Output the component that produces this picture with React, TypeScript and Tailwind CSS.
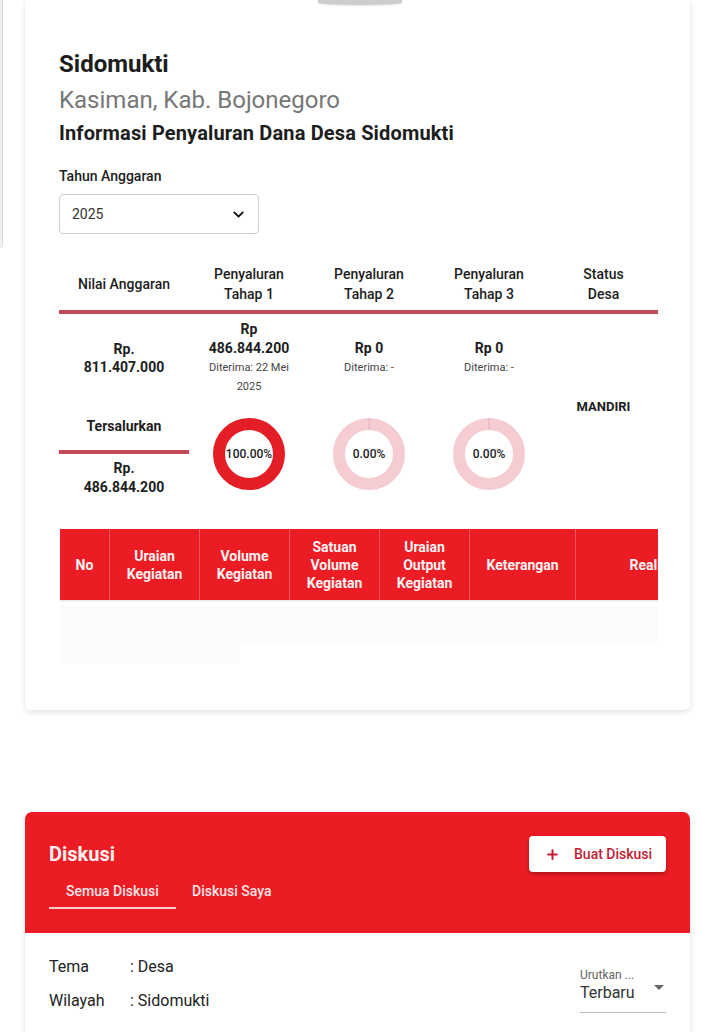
import { ChevronDown, Plus } from 'lucide-react';

const kegiatanCols = [
  { label: ['No'], w: 'w-[50px]' },
  { label: ['Uraian', 'Kegiatan'], w: 'w-[90px]' },
  { label: ['Volume', 'Kegiatan'], w: 'w-[90px]' },
  { label: ['Satuan', 'Volume', 'Kegiatan'], w: 'w-[90px]' },
  { label: ['Uraian', 'Output', 'Kegiatan'], w: 'w-[90px]' },
  { label: ['Keterangan'], w: 'w-[106px]' },
  { label: ['Realisasi'], w: 'w-[164px]' },
];

function Donut({ percent }: { percent: number }) {
  const r = 30;
  const c = 2 * Math.PI * r;
  const full = percent >= 100;
  return (
    <div className="relative h-[74px] w-[74px]">
      <svg width="74" height="74" viewBox="0 0 74 74">
        <circle cx="37" cy="37" r={r} fill="none" stroke={full ? '#e41e26' : '#f6ccd3'} strokeWidth="12" />
        {!full && (
          <circle
            cx="37"
            cy="37"
            r={r}
            fill="none"
            stroke="#e41e26"
            strokeWidth="12"
            strokeDasharray={`${(percent / 100) * c} ${c}`}
            transform="rotate(-90 37 37)"
          />
        )}
        {!full && <line x1="37" y1="1" x2="37" y2="13" stroke="#e6b3bb" strokeWidth="1" />}
      </svg>
      <span className="absolute inset-0 flex items-center justify-center text-[12px] font-medium text-[#222]">
        {percent.toFixed(2)}%
      </span>
    </div>
  );
}

function HeadCell({ lines }: { lines: string[] }) {
  return (
    <div className="flex flex-col items-center justify-center border-b-4 border-[#c14b57] pb-[6px] pt-2 text-center text-[14px] font-medium leading-5 text-[#1d1d1d]">
      {lines.map((l) => (
        <span key={l}>{l}</span>
      ))}
    </div>
  );
}

function Tahap({ amount, date }: { amount: string[]; date: string[] }) {
  return (
    <div className="flex flex-col items-center justify-center py-[6px] text-center">
      {amount.map((a) => (
        <span key={a} className="text-[14px] font-bold leading-[19px] text-[#1d1d1d]">
          {a}
        </span>
      ))}
      {date.map((d) => (
        <span key={d} className="text-[11px] leading-[19px] text-[#444]">
          {d}
        </span>
      ))}
    </div>
  );
}

export default function App() {
  return (
    <div className="relative min-h-[1032px] overflow-hidden bg-white font-['Roboto',sans-serif] text-[#1d1d1d]">
      {/* edge of the side panel */}
      <div className="absolute left-0 top-0 h-[248px] w-[3px] rounded-br-[3px] border-r border-[#dadada] bg-[#f1f1f1]" />

      {/* info card */}
      <div className="relative ml-[25px] w-[665px] rounded-b-[6px] bg-white px-[34px] pb-[46px] shadow-[0_2px_6px_rgba(0,0,0,0.12)]">
        <div className="absolute left-[293px] top-0 h-[5px] w-[84px] rounded-b-[50%] bg-[#cdcdcd] shadow-[0_1px_2px_rgba(0,0,0,0.1)]" />

        <h1 className="pt-[50px] text-[24px] font-bold leading-[28px]">Sidomukti</h1>
        <p className="mt-[6px] text-[24px] leading-[32px] text-[#777]">Kasiman, Kab. Bojonegoro</p>
        <h2 className="mt-[3px] text-[20px] font-bold leading-[28px] tracking-[0.15px]">
          Informasi Penyaluran Dana Desa Sidomukti
        </h2>

        <div className="mt-[19px] text-[14px] font-medium leading-5">Tahun Anggaran</div>
        <div className="mt-2 flex h-10 w-[200px] items-center justify-between rounded-[4px] border border-[#cfcfcf] pl-3 pr-[11px] text-[14px] text-[#333]">
          <span>2025</span>
          <ChevronDown size={17} strokeWidth={2.6} className="text-[#111]" />
        </div>

        <div className="mt-[22px] grid w-[599px] grid-cols-[130px_120px_120px_120px_109px]">
          <HeadCell lines={['Nilai Anggaran']} />
          <HeadCell lines={['Penyaluran', 'Tahap 1']} />
          <HeadCell lines={['Penyaluran', 'Tahap 2']} />
          <HeadCell lines={['Penyaluran', 'Tahap 3']} />
          <HeadCell lines={['Status', 'Desa']} />

          <div className="flex flex-col items-center justify-center text-center text-[14px] font-bold leading-[18px]">
            <span>Rp.</span>
            <span>811.407.000</span>
          </div>
          <Tahap amount={['Rp', '486.844.200']} date={['Diterima: 22 Mei', '2025']} />
          <Tahap amount={['Rp 0']} date={['Diterima: -']} />
          <Tahap amount={['Rp 0']} date={['Diterima: -']} />
          <div className="row-span-2 flex items-center justify-center text-[13px] font-bold">MANDIRI</div>

          <div className="flex flex-col text-center text-[14px] font-bold">
            <div className="border-b-4 border-[#c14b57] pb-[14px] pt-[14px] leading-5">Tersalurkan</div>
            <div className="flex flex-col pb-[3px] pt-[5px] leading-[19px]">
              <span>Rp.</span>
              <span>486.844.200</span>
            </div>
          </div>
          <div className="flex items-center justify-center pt-[6px]">
            <Donut percent={100} />
          </div>
          <div className="flex items-center justify-center pt-[6px]">
            <Donut percent={0} />
          </div>
          <div className="flex items-center justify-center pt-[6px]">
            <Donut percent={0} />
          </div>
        </div>

        {/* kegiatan table */}
        <div className="ml-px mt-[29px] w-[598px] overflow-hidden">
          <div className="flex w-max bg-[#ec1c24] shadow-[0_1px_2px_rgba(0,0,0,0.15)]">
            {kegiatanCols.map((col, i) => (
              <div
                key={col.label.join(' ')}
                className={`${col.w} flex h-[71px] shrink-0 flex-col items-center justify-center text-center text-[14px] font-bold leading-[18px] text-[#fff3f3] ${
                  i < kegiatanCols.length - 1 ? 'border-r border-[#f2555b]' : ''
                }`}
              >
                {col.label.map((l) => (
                  <span key={l}>{l}</span>
                ))}
              </div>
            ))}
          </div>
          <div className="mt-[6px] h-[38px] bg-[#fbfbfb]" />
          <div className="h-[20px] w-[180px] bg-[#fcfcfc]" />
        </div>
      </div>

      {/* diskusi */}
      <div className="ml-[25px] mt-[102px] w-[665px] rounded-t-[7px] bg-white shadow-[0_2px_6px_rgba(0,0,0,0.12)]">
        <div className="rounded-t-[7px] bg-[#ec1c24] px-6 pb-6 pt-6">
          <div className="flex h-9 items-center justify-between">
            <h3 className="text-[20px] font-bold leading-7 text-[#fff1f1]">Diskusi</h3>
            <button className="flex h-9 w-[137px] items-center gap-[14px] rounded-[4px] bg-white pl-4 text-[14px] font-medium text-[#bf1e33] shadow-[0_2px_4px_rgba(0,0,0,0.3)]">
              <Plus size={15} strokeWidth={3.2} />
              <span>Buat Diskusi</span>
            </button>
          </div>
          <div className="flex text-[14px] font-medium leading-5 text-[#fde4e4]">
            <div className="w-[127px] border-b-2 border-[#f9cccc] pb-[6px] pt-[9px] text-center">Semua Diskusi</div>
            <div className="px-4 pb-[6px] pt-[9px]">Diskusi Saya</div>
          </div>
        </div>

        <div className="flex justify-between px-6 pb-6 pt-[22px]">
          <div className="flex flex-col gap-[10px] text-[16px] leading-6 text-[#222]">
            <div className="flex">
              <span className="w-[81px]">Tema</span>
              <span>: Desa</span>
            </div>
            <div className="flex">
              <span className="w-[81px]">Wilayah</span>
              <span>: Sidomukti</span>
            </div>
          </div>
          <div className="mt-[12px] h-[46px] w-[86px] border-b border-[#bdbdbd]">
            <div className="text-[12px] leading-4 text-[#666]">Urutkan ...</div>
            <div className="-mt-[2px] flex items-center justify-between">
              <span className="text-[16px] leading-6 text-[#333]">Terbaru</span>
              <span className="mb-[12px] mr-[2px] h-0 w-0 border-x-[5px] border-t-[5px] border-x-transparent border-t-[#666]" />
            </div>
          </div>
        </div>
      </div>
    </div>
  );
}
